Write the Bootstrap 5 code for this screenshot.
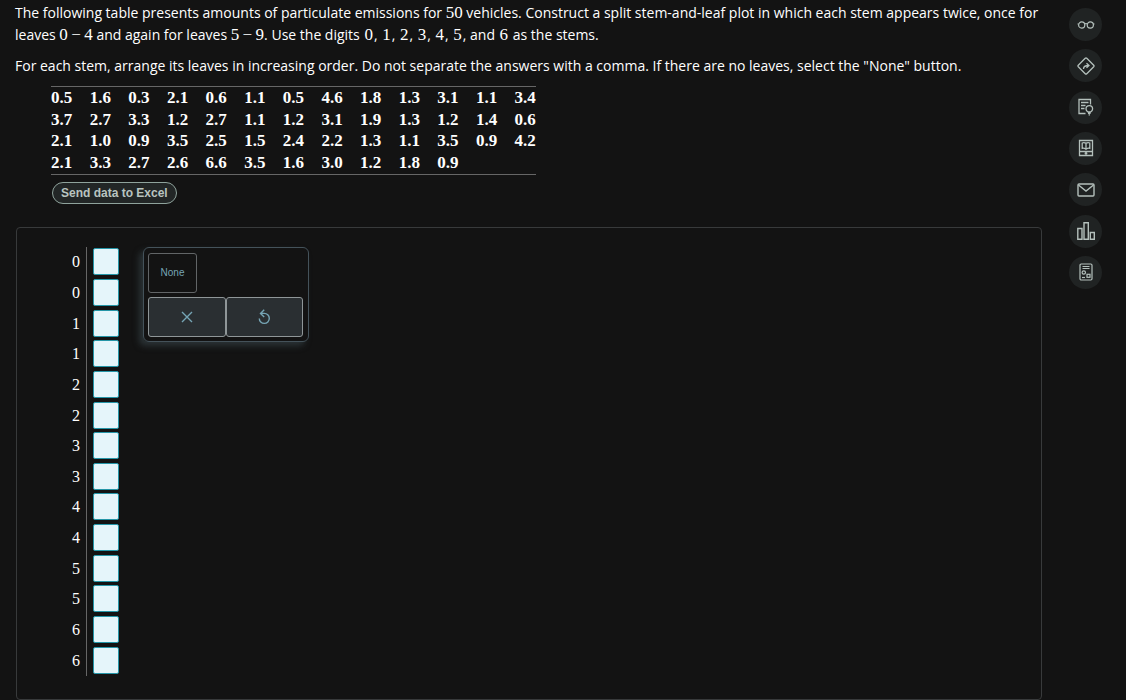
<!DOCTYPE html>
<html lang="en" data-bs-theme="dark">
<head>
<meta charset="utf-8">
<meta name="viewport" content="width=device-width, initial-scale=1">
<title>Split stem-and-leaf plot</title>
<link href="https://cdn.jsdelivr.net/npm/bootstrap@5.3.0/dist/css/bootstrap.min.css" rel="stylesheet">
<style>
  body { background: #131313; color: #fff; font: 14px/22px "Open Sans", sans-serif; }
  .page { padding: 2px 24px 0 15px; gap: 27px; }
  .intro { margin: 0 0 9px; }
  .num { font: 17px/20px "Liberation Serif", serif; }
  .digit { margin: 0 1px; }
  .emissions { width: 485px; height: 89px; margin: 9px 0 7px 36px; border-top: 1px solid #666; border-bottom: 1px solid #666;
    font: bold 17px/20px "Liberation Serif", serif; }
  .emissions td { padding: 0 17px 0 0; }
  .emissions td:last-child { padding-right: 0; }
  .btn-excel { margin-left: 37px; padding: 0 8px; height: 22px; border: 1px solid #8fa39c; border-radius: 11px;
    background: #222626; color: #b9c4c0; font: bold 12px/20px "Liberation Sans", sans-serif; }
  .answer { margin: 23px 0 0 1px; padding: 19px 16px 23px 52px; border: 1px solid #383a3b; border-radius: 4px; gap: 24px; }
  .stems { height: 429px; font: 16px/20px "Liberation Serif", serif; }
  .stems th { padding: 0 6px 0 3px; font-weight: 400; border-right: 1px solid #666; }
  .stems td { padding: 0 0 1px 6px; }
  .leaf { display: block; width: 26px; height: 27px; padding: 0 4px; background: #e5f5fa; color: #131313; border: 1px solid #2596a8; border-radius: 2px; }
  .keypad { width: 166px; padding: 5px 5px 4px 4px; border: 1px solid #44525a; border-radius: 6px; box-shadow: -4px 4px 6px #2a3235; }
  .key { flex: 1 1 0; border: 1px solid #8f9698; border-radius: 3px; background: #2a2f32; color: #76a5b5; height: 40px; padding: 0; }
  .key-none { width: 49px; border-color: #626567; background: #131313; font: 10px/20px "Liberation Sans", sans-serif; margin-bottom: 4px; }
  .tools { min-height: 287px; padding-top: 6px; }
  .tool { width: 33px; height: 33px; border: 0; border-radius: 50%; background: #202323; color: #b4c0bc; }
  .tool svg, .key svg { fill: none; stroke: currentColor; }
</style>
</head>
<body>
<div class="page d-flex align-items-start">
  <main class="flex-grow-1">
    <p class="intro">The following table presents amounts of particulate emissions for <span class="num">50</span> vehicles. Construct a split stem-and-leaf plot in which each stem appears twice, once for leaves <span class="num">0&thinsp;−&thinsp;4</span> and again for leaves <span class="num">5&thinsp;−&thinsp;9</span>. Use the digits <span class="num digit">0</span>, <span class="num digit">1</span>, <span class="num digit">2</span>, <span class="num digit">3</span>, <span class="num digit">4</span>, <span class="num digit">5</span>, and <span class="num digit">6</span> as the stems.</p>
    <p class="m-0">For each stem, arrange its leaves in increasing order. Do not separate the answers with a comma. If there are no leaves, select the "None" button.</p>

    <table class="emissions">
      <tbody>
        <tr><td>0.5</td><td>1.6</td><td>0.3</td><td>2.1</td><td>0.6</td><td>1.1</td><td>0.5</td><td>4.6</td><td>1.8</td><td>1.3</td><td>3.1</td><td>1.1</td><td>3.4</td></tr>
        <tr><td>3.7</td><td>2.7</td><td>3.3</td><td>1.2</td><td>2.7</td><td>1.1</td><td>1.2</td><td>3.1</td><td>1.9</td><td>1.3</td><td>1.2</td><td>1.4</td><td>0.6</td></tr>
        <tr><td>2.1</td><td>1.0</td><td>0.9</td><td>3.5</td><td>2.5</td><td>1.5</td><td>2.4</td><td>2.2</td><td>1.3</td><td>1.1</td><td>3.5</td><td>0.9</td><td>4.2</td></tr>
        <tr><td>2.1</td><td>3.3</td><td>2.7</td><td>2.6</td><td>6.6</td><td>3.5</td><td>1.6</td><td>3.0</td><td>1.2</td><td>1.8</td><td>0.9</td><td></td><td></td></tr>
      </tbody>
    </table>
    <button type="button" class="btn btn-excel d-block">Send data to Excel</button>

    <section class="answer d-flex align-items-start" aria-label="Answer">
      <table class="stems">
        <tbody>
          <tr><th scope="row">0</th><td><input class="leaf" aria-label="Leaves 0 to 4 of stem 0"></td></tr>
          <tr><th scope="row">0</th><td><input class="leaf" aria-label="Leaves 5 to 9 of stem 0"></td></tr>
          <tr><th scope="row">1</th><td><input class="leaf" aria-label="Leaves 0 to 4 of stem 1"></td></tr>
          <tr><th scope="row">1</th><td><input class="leaf" aria-label="Leaves 5 to 9 of stem 1"></td></tr>
          <tr><th scope="row">2</th><td><input class="leaf" aria-label="Leaves 0 to 4 of stem 2"></td></tr>
          <tr><th scope="row">2</th><td><input class="leaf" aria-label="Leaves 5 to 9 of stem 2"></td></tr>
          <tr><th scope="row">3</th><td><input class="leaf" aria-label="Leaves 0 to 4 of stem 3"></td></tr>
          <tr><th scope="row">3</th><td><input class="leaf" aria-label="Leaves 5 to 9 of stem 3"></td></tr>
          <tr><th scope="row">4</th><td><input class="leaf" aria-label="Leaves 0 to 4 of stem 4"></td></tr>
          <tr><th scope="row">4</th><td><input class="leaf" aria-label="Leaves 5 to 9 of stem 4"></td></tr>
          <tr><th scope="row">5</th><td><input class="leaf" aria-label="Leaves 0 to 4 of stem 5"></td></tr>
          <tr><th scope="row">5</th><td><input class="leaf" aria-label="Leaves 5 to 9 of stem 5"></td></tr>
          <tr><th scope="row">6</th><td><input class="leaf" aria-label="Leaves 0 to 4 of stem 6"></td></tr>
          <tr><th scope="row">6</th><td><input class="leaf" aria-label="Leaves 5 to 9 of stem 6"></td></tr>
        </tbody>
      </table>
      <div class="keypad">
        <button type="button" class="key key-none d-block">None</button>
        <div class="d-flex">
          <button type="button" class="key d-flex align-items-center justify-content-center" aria-label="Clear">
            <svg width="12" height="12" stroke-width="1.4"><path d="M1 1L11 11M11 1L1 11"/></svg>
          </button>
          <button type="button" class="key d-flex align-items-center justify-content-center" aria-label="Reset">
            <svg width="13" height="16" stroke-width="1.4"><path d="M6.2 .8L2.5 4.4L6.2 8M2.5 4.4H6.2A5 5 0 1 1 1.3 9.4"/></svg>
          </button>
        </div>
      </div>
    </section>
  </main>

  <nav class="tools d-flex flex-column justify-content-between flex-shrink-0" aria-label="Tools">
    <button type="button" class="tool btn d-flex align-items-center justify-content-center p-0" aria-label="Reading view">
      <svg width="18" height="10" stroke-width="1.2"><circle cx="4.7" cy="5" r="3.1"/><circle cx="13.3" cy="5" r="3.1"/><path d="M7.6 4q1.4-1 2.8 0M1.7 4H.5M16.3 4H17.5"/></svg>
    </button>
    <button type="button" class="tool btn d-flex align-items-center justify-content-center p-0" aria-label="Directions">
      <svg width="18" height="18" stroke-width="1.3"><path d="M8.2 1.3Q9 .6 9.8 1.3L16.7 8.2Q17.4 9 16.7 9.8L9.8 16.7Q9 17.4 8.2 16.7L1.3 9.8Q.6 9 1.3 8.2ZM6.5 12Q6.5 8.5 11.5 8.5M9.5 6.2L12 8.5L9.5 10.8"/></svg>
    </button>
    <button type="button" class="tool btn d-flex align-items-center justify-content-center p-0" aria-label="Hints">
      <svg width="18" height="18" stroke-width="1.3"><path d="M8.5 15.5H2V1.5H13.5V6.5M4 4.5H11.5M4 7.5H8.5M4 10.5H7.5M11 14Q9 12.8 9 11A3.3 3.3 0 0 1 15.6 11Q15.6 12.8 13.6 14ZM11 15.4H13.6M11.6 16.8H13"/></svg>
    </button>
    <button type="button" class="tool btn d-flex align-items-center justify-content-center p-0" aria-label="Textbook">
      <svg width="18" height="18" stroke-width="1.3"><path d="M2.5 1.5H15.5V16.5H2.5ZM2.5 12.5H15.5M9 4.2V10.3M9 4.2Q7 3.2 5.2 4V9.3Q7 8.8 9 10.2Q11 8.8 12.8 9.3V4Q11 3.2 9 4.2"/><circle cx="9" cy="14.4" r=".8"/></svg>
    </button>
    <button type="button" class="tool btn d-flex align-items-center justify-content-center p-0" aria-label="Messages">
      <svg width="18" height="14" stroke-width="1.4"><rect x="1" y="1" width="16" height="12" rx="1"/><path d="M1.5 2L9 8L16.5 2"/></svg>
    </button>
    <button type="button" class="tool btn d-flex align-items-center justify-content-center p-0" aria-label="Data">
      <svg width="18" height="18" stroke-width="1.4"><path d="M.8 6.5H5V17.3H.8ZM7 .8H11.3V17.3H7ZM13.3 10.5H17.3V17.3H13.3Z"/></svg>
    </button>
    <button type="button" class="tool btn d-flex align-items-center justify-content-center p-0" aria-label="Formulas">
      <svg width="14" height="18" stroke-width="1.2"><rect x="1" y="1" width="12" height="16" rx="1.2"/><path d="M3.5 3.5H10.5M3.5 5.5H10.5"/><circle cx="4.8" cy="9.5" r="1.7"/><rect x="8" y="11.3" width="3" height="3"/><path d="M3 14.5H6"/></svg>
    </button>
  </nav>
</div>
<script src="https://cdn.jsdelivr.net/npm/bootstrap@5.3.0/dist/js/bootstrap.bundle.min.js"></script>
</body>
</html>
